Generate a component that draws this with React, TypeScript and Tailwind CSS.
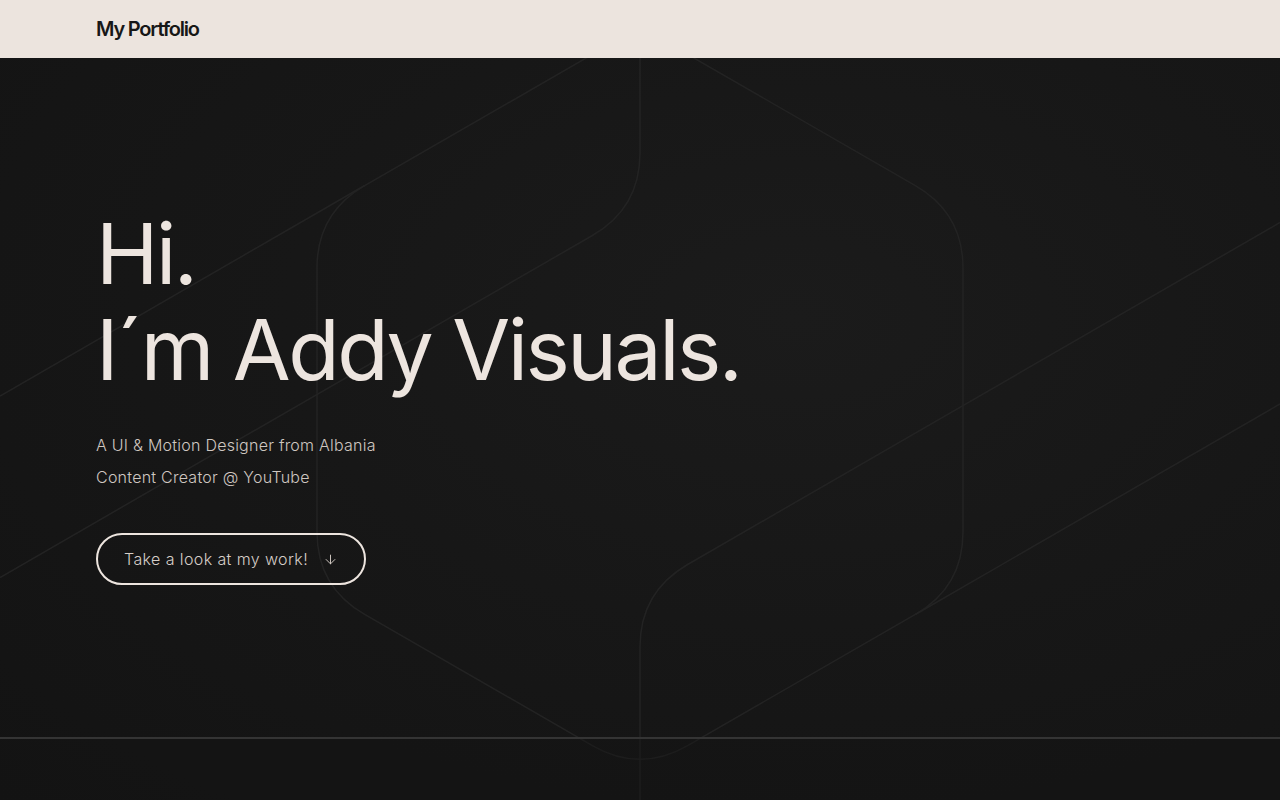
import { ArrowDown } from "lucide-react";

type Pt = [number, number];

// rounded polyline / polygon path for the background drawing
const roundedPath = (pts: Pt[], r: number, closed = false) => {
  const n = pts.length;
  let d = "";
  const at = (i: number) => pts[(i + n) % n];
  const toward = (a: Pt, b: Pt, dist: number): Pt => {
    const dx = b[0] - a[0];
    const dy = b[1] - a[1];
    const len = Math.hypot(dx, dy);
    return [a[0] + (dx / len) * dist, a[1] + (dy / len) * dist];
  };
  for (let i = 0; i < n; i++) {
    const p = at(i);
    const isEnd = !closed && (i === 0 || i === n - 1);
    if (isEnd) {
      d += i === 0 ? `M${p[0]},${p[1]}` : ` L${p[0]},${p[1]}`;
      continue;
    }
    const a = toward(p, at(i - 1), r);
    const b = toward(p, at(i + 1), r);
    d += i === 0 ? `M${a[0]},${a[1]}` : ` L${a[0]},${a[1]}`;
    d += ` Q${p[0]},${p[1]} ${b[0]},${b[1]}`;
  }
  if (closed) d += " Z";
  return d;
};

const T = 0.57735;
const R = 55;

const hexagon: Pt[] = [
  [640, -31],
  [963, 155],
  [963, 529],
  [640, 715],
  [317, 529],
  [317, 155],
];

const BackgroundLines = () => (
  <svg
    className="pointer-events-none absolute inset-0 h-full w-full"
    viewBox="0 0 1280 742"
    preserveAspectRatio="none"
    fill="none"
  >
    <g stroke="#232323" strokeWidth="1.5">
      <path d={roundedPath(hexagon, R, true)} />
      <path d={roundedPath([[640, -20], [640, 150], [0, 150 + 640 * T]], R)} />
      <path d={roundedPath([[1280, 534 - 640 * T], [640, 534], [640, 760]], R)} />
      {/* edge extensions past the rounded corners */}
      <path d={`M${317 + R * 0.866},${155 - R * 0.5} L0,${155 + 317 * T}`} />
      <path d={`M${963 - R * 0.866},${529 + R * 0.5} L1280,${529 - 317 * T}`} />
    </g>
  </svg>
);

const Header = () => (
  <header className="flex h-[58px] items-center bg-[#ece4de] px-24">
    <a href="/" className="font-['Inter',sans-serif] text-[20px] font-semibold tracking-[-0.06em] text-[#171717]">
      My Portfolio
    </a>
  </header>
);

const Hero = () => (
  <section className="relative h-[679px]">
    <div className="relative flex flex-col px-24 pt-[148px]">
      <h1 className="font-['Inter',sans-serif] text-[84px] font-normal leading-[96px] tracking-[-0.03em] text-[#ede5df]">
        Hi.
        <br />
        I´m Addy Visuals.
      </h1>
      <div className="mt-[31px] flex flex-col font-['Inter',sans-serif] text-base font-light leading-8 tracking-[0.015em] text-[#cfc7c1]">
        <p>A UI &amp; Motion Designer from Albania</p>
        <p>Content Creator @ YouTube</p>
      </div>
      <div className="mt-[40px]">
        <button className="flex h-[52px] items-center gap-[15px] rounded-full border-2 border-[#ede5df] pl-[26px] pr-[26px] font-['Inter',sans-serif] text-base font-light tracking-[0.025em] text-[#d6cec8]">
          <span>Take a look at my work!</span>
          <ArrowDown className="size-[15px]" strokeWidth={1.5} />
        </button>
      </div>
    </div>
  </section>
);

export default function App() {
  return (
    <div className="min-h-screen bg-[#141414]">
      <Header />
      <div className="relative overflow-hidden bg-[radial-gradient(ellipse_at_62%_35%,#1b1b1b_0%,#171717_45%,#131313_100%)]">
        <BackgroundLines />
        <Hero />
        <section className="relative h-[63px] border-t-2 border-[#343434] bg-[#131313]/40" />
      </div>
    </div>
  );
}
